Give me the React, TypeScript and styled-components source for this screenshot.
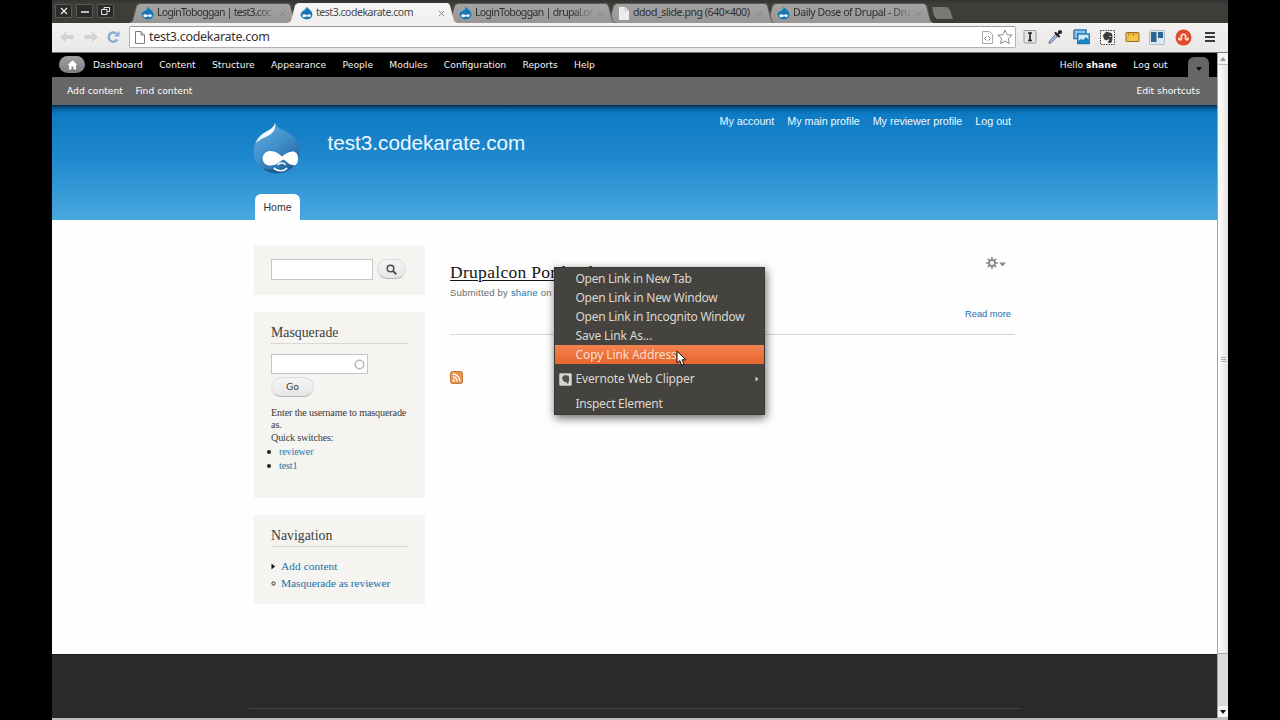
import React from "react";
import styled, { createGlobalStyle, css } from "styled-components";

const UI = `"Noto Sans", "Open Sans", sans-serif`;
const SERIF = `"Liberation Serif", serif`;
const SANS = `"Liberation Sans", sans-serif`;
const DEJA = `"DejaVu Sans", sans-serif`;

const Global = createGlobalStyle`
  * { box-sizing: border-box; }
  body { margin: 0; background: #000; overflow: hidden; }
  ul { margin: 0; padding: 0; list-style: none; }
  h1, h2, h3, p { margin: 0; font-weight: normal; }
  svg { display: block; flex: none; }
`;

const Screen = styled.div`
  position: relative;
  width: 1280px;
  height: 720px;
  padding: 0 52px;
  background: #000;
  overflow: hidden;
`;
const Browser = styled.div`
  display: flex;
  flex-direction: column;
  width: 1176px;
  height: 720px;
  background: #bdbdbd;
`;

/* ---- title bar with tabs ---- */
const TitleBar = styled.div`
  display: flex;
  height: 23px;
  flex: none;
  background: linear-gradient(#343331, #3f3e3b 4px, #3c3b38);
`;
const WindowButtons = styled.div`
  display: flex;
  gap: 4px;
  padding: 4px 0 0 3px;
  width: 77px;
`;
const WindowButton = styled.div`
  display: grid;
  place-items: center;
  width: 17px;
  height: 14px;
  border: 1px solid #5b5955;
  border-radius: 1px;
  background: #2b2a28;
`;
const TabStrip = styled.div`
  display: flex;
  padding-top: 3px;
`;
const TabShape = styled.div<{ $active?: boolean; $z: number }>`
  position: relative;
  z-index: ${(p) => p.$z};
  width: 169px;
  height: 20px;
  margin-right: -10px;
  background: ${(p) => (p.$active ? "#f1f0ef" : "#5a5855")};
  clip-path: polygon(0 100%, 3px 90%, 7px 10%, 10px 0, 160px 0, 162px 10%, 166px 90%, 169px 100%);
`;
const TabFace = styled.div<{ $active?: boolean }>`
  display: flex;
  align-items: center;
  height: 20px;
  padding: 0 12px 0 12px;
  background: ${(p) => (p.$active ? "linear-gradient(#f8f7f6, #f0efee)" : "linear-gradient(#a5a4a2, #979694)")};
  clip-path: polygon(1px 100%, 4px 90%, 8px 14%, 11px 1px, 159px 1px, 161px 14%, 165px 90%, 168px 100%);
`;
const TabTitle = styled.span<{ $active?: boolean; $fade?: boolean; $ls: number }>`
  flex: 1;
  margin-left: 3px;
  white-space: nowrap;
  font: 10.5px/18px ${UI};
  height: 20px;
  letter-spacing: ${(p) => p.$ls}px;
  color: ${(p) => (p.$active ? "#474747" : "#2e2e2e")};
  ${(p) => p.$fade && css`mask-image: linear-gradient(90deg, #000 80%, transparent 99%);`}
`;
const NewTab = styled.div`
  width: 21px;
  height: 12px;
  margin: 4px 0 0 8px;
  background: #7a7977;
  clip-path: polygon(0 0, 15px 0, 18px 3px, 21px 12px, 5px 12px, 2px 9px);
`;

/* ---- address toolbar ---- */
const NavBar = styled.div`
  display: flex;
  align-items: center;
  height: 30px;
  flex: none;
  padding: 0 9px 1px 7px;
  background: linear-gradient(#f3f2f1, #e9e8e6);
  border-bottom: 1px solid #77757a;
`;
const NavArrows = styled.div`
  display: flex;
  align-items: center;
  gap: 8px;
  width: 70px;
`;
const Omnibox = styled.div`
  display: flex;
  align-items: center;
  gap: 4px;
  width: 887px;
  height: 22px;
  padding: 0 2px 0 5px;
  background: #fff;
  border: 1px solid #b3b1af;
  border-top-color: #9b9a98;
  border-radius: 2px;
`;
const Url = styled.span`
  flex: 1;
  font: 12.5px/20px ${UI};
  letter-spacing: -0.3px;
  color: #333;
`;
const Extensions = styled.div`
  display: flex;
  flex: 1;
  align-items: center;
  justify-content: space-between;
  padding-left: 6px;
`;

/* ---- viewport ---- */
const Viewport = styled.div`
  display: flex;
  height: 665px;
  flex: none;
`;
const Page = styled.div`
  display: flex;
  flex-direction: column;
  width: 1165px;
  background: #fefefe;
`;
const AdminBar = styled.div`
  display: flex;
  height: 24px;
  flex: none;
  padding: 0 8px 0 7px;
  background: #000;
  font: 9.2px/24px ${DEJA};
  color: #f2f2f2;
`;
const HomePill = styled.div`
  display: grid;
  place-items: center;
  width: 26px;
  height: 17px;
  margin: 3px 8px 0 0;
  border-radius: 9px;
  background: linear-gradient(#a0a0a0, #7e7e7e);
`;
const AdminLinks = styled.div`
  display: flex;
  gap: 16.3px;
`;
const AdminRight = styled(AdminLinks)`
  margin-left: auto;
`;
const DrawerToggle = styled.div`
  display: grid;
  place-items: center;
  width: 21px;
  height: 20px;
  margin: 4px 0 0 4px;
  padding-top: 3px;
  border-radius: 6px 6px 0 0;
  background: #666;
`;
const ShortcutBar = styled.div`
  display: flex;
  gap: 12.5px;
  height: 28px;
  flex: none;
  padding: 0 17px 0 15px;
  background: #666;
  font: 9.2px/28px ${DEJA};
  color: #fff;
`;
const PushRight = styled.span`
  margin-left: auto;
`;
const Header = styled.header`
  display: flex;
  height: 115px;
  flex: none;
  padding: 0 206px 0 201px;
  background:
    linear-gradient(rgba(0, 20, 35, 0.75), rgba(0, 30, 60, 0.25) 4px, rgba(0, 30, 60, 0) 9px),
    linear-gradient(#0a78c2, #1f88cd 45%, #48a8e0);
  font-family: ${SANS};
  color: #eef8ff;
`;
const Branding = styled.div`
  display: flex;
  flex-direction: column;
  justify-content: space-between;
`;
const BrandRow = styled.div`
  display: flex;
  gap: 26.5px;
  padding-top: 16px;
`;
const SiteName = styled.h1`
  font-size: 20.7px;
  line-height: 24px;
  padding-top: 10px;
`;
const HomeTab = styled.div`
  width: 45px;
  height: 26px;
  margin-left: 2px;
  border-radius: 6px 6px 0 0;
  background: #fefefe;
  font-size: 10.5px;
  line-height: 27px;
  text-align: center;
  color: #333;
`;
const UserLinks = styled.nav`
  display: flex;
  gap: 13px;
  margin-left: auto;
  font-size: 10.75px;
  letter-spacing: -0.03px;
  line-height: 33px;
`;
const Main = styled.main`
  display: flex;
  height: 434px;
  flex: none;
  gap: 25px;
  padding: 25px 202px 0;
`;
const Sidebar = styled.aside`
  display: flex;
  flex-direction: column;
  width: 171px;
  gap: 17px;
`;
const Block = styled.section<{ $h: number }>`
  height: ${(p) => p.$h}px;
  padding: 0 17px;
  background: #f5f4f1;
  font-family: ${SERIF};
  color: #3b3b3b;
`;
const SearchRow = styled.div`
  display: flex;
  gap: 4px;
  padding-top: 14px;
`;
const Field = styled.div<{ $w: number; $h: number }>`
  display: flex;
  align-items: center;
  justify-content: flex-end;
  width: ${(p) => p.$w}px;
  height: ${(p) => p.$h}px;
  padding-right: 2px;
  background: #fff;
  border: 1px solid #c6c6c4;
`;
const PillButton = styled.div<{ $w: number; $top?: number }>`
  display: grid;
  place-items: center;
  width: ${(p) => p.$w}px;
  height: 20px;
  margin-top: ${(p) => p.$top ?? 0}px;
  border: 1px solid #dcdcdc;
  border-bottom-color: #b4b4b4;
  border-radius: 10px;
  background: linear-gradient(#f5f5f5, #e6e6e6);
  font: 9.5px/18px ${DEJA};
  color: #3a3a3a;
`;
const BlockTitle = styled.h2`
  height: 32px;
  margin-bottom: 10px;
  padding-top: 11px;
  border-bottom: 1px solid #d8d7d4;
  font-size: 13.8px;
  line-height: 20px;
`;
const Help = styled.p`
  margin-top: 10px;
  font-size: 10.2px;
  line-height: 12.3px;
  white-space: nowrap;
`;
const Switches = styled.ul`
  margin: 1px 0 0 -4px;
  font-size: 10.2px;
  line-height: 14.2px;
  color: #1b78ae;
`;
const SwitchItem = styled.li`
  display: flex;
  align-items: center;
  gap: 8px;
  letter-spacing: -0.15px;
  &::before {
    content: "";
    width: 4px;
    height: 4px;
    border-radius: 50%;
    background: #222;
  }
`;
const NavList = styled.ul`
  padding-top: 1px;
  font-size: 11.4px;
  line-height: 17px;
  color: #1b70a6;
`;
const NavItem = styled.li`
  display: flex;
  align-items: center;
  gap: 5px;
  white-space: nowrap;
`;
const Content = styled.article`
  width: 565px;
`;
const Node = styled.div`
  display: flex;
  justify-content: space-between;
  height: 90px;
  border-bottom: 1px solid #d6d6d6;
`;
const NodeText = styled.div`
  padding-top: 16px;
`;
const NodeTitle = styled.h2`
  font: 17.5px/22px ${SERIF};
  color: #151515;
  text-decoration: underline;
  text-decoration-thickness: 1px;
  text-underline-offset: 2px;
  white-space: nowrap;
`;
const Submitted = styled.p`
  margin-top: 4px;
  font: 9.6px/12px ${SANS};
  letter-spacing: 0.17px;
  color: #6c6c6c;
  white-space: nowrap;
`;
const LinkText = styled.span`
  color: #1b78ae;
`;
const NodeSide = styled.div`
  display: flex;
  flex-direction: column;
  justify-content: space-between;
  align-items: flex-end;
  padding: 12px 4px 14px 0;
  font: 9.3px/12px ${SANS};
  color: #1b70a6;
`;
const Gear = styled.div`
  display: flex;
  align-items: center;
  gap: 1px;
  margin-right: 5px;
`;
const FeedIcon = styled.div`
  padding-top: 36px;
`;
const Footer = styled.footer`
  flex: 1;
  padding: 53px 197px 0 197px;
  background: #2a2a2a;
  border-top: 1px solid #1b1b1b;
`;
const FooterRule = styled.div`
  border-top: 1px solid #464646;
`;

/* ---- scrollbar ---- */
const Scrollbar = styled.div`
  display: flex;
  flex-direction: column;
  justify-content: space-between;
  width: 11px;
  background: #dadada;
  border-left: 1px solid #a5a3a1;
`;
const ScrollButton = styled.div`
  display: grid;
  place-items: center;
  height: 12px;
  background: #f5f5f5;
  border-bottom: 1px solid #bbb;
`;
const Thumb = styled.div`
  display: flex;
  flex-direction: column;
  align-items: center;
  justify-content: center;
  gap: 1px;
  height: 589px;
  margin-bottom: auto;
  background: linear-gradient(90deg, #fff, #f3f2f1 50%, #e2e1e0);
  border-bottom: 1px solid #a9a9a9;
`;
const Grip = styled.div`
  width: 5px;
  height: 1px;
  background: #aaa;
`;

/* ---- context menu ---- */
const Menu = styled.div`
  position: absolute;
  left: 554px;
  top: 267px;
  width: 211px;
  height: 148px;
  padding-top: 2px;
  background: #444340;
  border: 1px solid #3a3936;
  box-shadow: 1px 3px 9px rgba(0, 0, 0, 0.6);
`;
const MenuItem = styled.div<{ $hot?: boolean; $space?: boolean }>`
  display: flex;
  align-items: center;
  height: ${(p) => (p.$space ? 19 : 18.8)}px;
  margin-top: ${(p) => (p.$space ? 5.6 : 0)}px;
  padding-right: 5px;
  font: 12px/18px ${UI};
  white-space: nowrap;
  color: ${(p) => (p.$hot ? "#f9ddce" : "#dcd8cf")};
  background: ${(p) => (p.$hot ? "linear-gradient(#f28350, #e7652f)" : "none")};
`;
const MenuIcon = styled.div`
  width: 20.500px;
  padding-left: 4px;
`;
const Label = styled.span<{ $ls: number }>`
  letter-spacing: ${(p) => p.$ls}px;
`;
const Pointer = styled.div`
  position: absolute;
  left: 676px;
  top: 350px;
`;

const DropIcon = () => (
  <svg width="13" height="14" viewBox="0 0 13 14">
    <path d="M6.8.8C7.6 2.600 12.400 4.500 12.400 8.600c0 3-2.600 4.900-5.700 4.900S.6 11.500.6 8.600C.6 5.400 5.600 3.800 6.800.8Z" fill="#1876b4" />
    <path d="M3 8.600c1.400-.8 2.700 0 3.800.6 1.400-.9 3.400-1.500 4 .1.300 1.800-1.700 2.200-3.800 1C5 11.700 2.400 11.300 2.300 9.900c0-.6.200-1 .7-1.300Z" fill="#f2f6f8" />
    <path d="M1.600 6.200C2.600 4.200 5.500 3.400 6.700 1.600 6.400 4.300 3.400 4.700 1.600 6.200Z" fill="#8cc4e4" />
  </svg>
);
const FileIcon = ({ light }: { light?: boolean }) => (
  <svg width={light ? 12 : 10} height="13" viewBox="0 0 10 13">
    <path d="M.5.5H6L9.500 4v8.500h-9Z" fill={light ? "#eceae8" : "#fff"} stroke={light ? "#f4f3f2" : "#7c7c7c"} />
    <path d="M6 .5V4h3.500" fill="none" stroke={light ? "#c9c7c5" : "#7c7c7c"} />
  </svg>
);
const Close = () => (
  <svg width="7" height="7" viewBox="0 0 7 7">
    <path d="M1 1l5 5M6 1L1 6" stroke="#858482" strokeWidth="1" />
  </svg>
);
const ArrowIcon = ({ flip }: { flip?: boolean }) => (
  <svg width="16" height="12" viewBox="0 0 16 12">
    <path d={flip ? "M15 6L9 .7v3.200H1.500v4.200H9v3.200Z" : "M1 6l6-5.300v3.200h7.500v4.200H7v3.200Z"} fill="#d3d2d0" />
  </svg>
);
const Druplicon = () => (
  <svg width="48" height="54" viewBox="0 0 48 54">
    <defs>
      <linearGradient id="drop" x1="0" y1="0" x2=".7" y2="1">
        <stop offset="0" stopColor="#6bb0e2" />
        <stop offset=".55" stopColor="#3f8fcb" />
        <stop offset="1" stopColor="#22659c" />
      </linearGradient>
    </defs>
    <path d="M22 .8c1 4.400 3.800 6.400 8 8.300C39.500 13.200 46.500 18.500 46.500 30c0 13.500-9.800 22.500-23 22.500S.7 43.500.7 31C.7 20.500 5.500 15.300 12 11.500 17 8.600 21.500 6.500 22 .8Z" fill="url(#drop)" />
    <path d="M2.800 22.500C4.500 16.500 9 13 13.500 10.500 17.500 8.200 21 6.300 22 2c.8 5-.6 8.400-4.500 11.200C12.500 16.800 6.500 17.300 2.800 22.500Z" fill="#f4faff" />
    <path d="M10 47c6 6.500 22 8.500 31-4-5 3-18 8-31 4Z" fill="#1d5f95" />
    <path d="M16.500 30c5-.5 8.500 2 12.500 5.500 4-3.400 8.500-5.900 12.500-4.700 4.500 1.600 4.800 10.500 1.300 13-3.800 1.900-8-1.900-12.300-5.300-4.500 3-8 6-13 6-5 0-8-3.300-7.800-7.300.2-4 3.300-6.900 6.800-7.200Z" fill="#fff" />
    <path d="M24.500 44c2.200-2.600 6-2.800 8-.3" fill="none" stroke="#fff" strokeWidth="1.500" />
    <path d="M21.300 47.500c3.500 3 9 3 12.400-.2" fill="none" stroke="#fff" strokeWidth="1.700" strokeLinecap="round" />
  </svg>
);

const tabs = [
  { title: "LoginToboggan | test3.coc", ls: -0.72, fade: true },
  { title: "test3.codekarate.com", ls: -0.47, active: true },
  { title: "LoginToboggan | drupal.or", ls: -0.66, fade: true },
  { title: "ddod_slide.png (640×400)", ls: -0.42, file: true },
  { title: "Daily Dose of Drupal - Dru", ls: -0.42, fade: true },
];

const adminLinks = ["Dashboard", "Content", "Structure", "Appearance", "People", "Modules", "Configuration", "Reports", "Help"];

export default function App() {
  return (
    <Screen>
      <Global />
      <Browser>
        <TitleBar>
          <WindowButtons>
            <WindowButton>
              <svg width="8" height="8" viewBox="0 0 8 8"><path d="M1 1l6 6M7 1L1 7" stroke="#eee" strokeWidth="1.300" /></svg>
            </WindowButton>
            <WindowButton>
              <svg width="8" height="8" viewBox="0 0 8 8"><path d="M0 5h8" stroke="#eee" strokeWidth="1.500" /></svg>
            </WindowButton>
            <WindowButton>
              <svg width="9" height="8" viewBox="0 0 9 8"><path d="M3 2.500V.5h5.500v4h-2M.5 2.500H6v5H.5Z" fill="none" stroke="#e4e4e4" /></svg>
            </WindowButton>
          </WindowButtons>
          <TabStrip>
            {tabs.map((t, i) => (
              <TabShape key={t.title} $active={t.active} $z={t.active ? 9 : 6 - i}>
                <TabFace $active={t.active}>
                  {t.file ? <FileIcon light /> : <DropIcon />}
                  <TabTitle $active={t.active} $fade={t.fade} $ls={t.ls}>{t.title}</TabTitle>
                  <Close />
                </TabFace>
              </TabShape>
            ))}
            <NewTab />
          </TabStrip>
        </TitleBar>

        <NavBar>
          <NavArrows>
            <ArrowIcon />
            <ArrowIcon flip />
            <svg width="14" height="14" viewBox="0 0 14 14">
              <path d="M10.300 9.500A4.600 4.600 0 1 1 9.600 3.900" fill="none" stroke="#86aed2" strokeWidth="2.500" />
              <path d="M12.500 1V6.500H7Z" fill="#86aed2" />
            </svg>
          </NavArrows>
          <Omnibox>
            <FileIcon />
            <Url>test3.codekarate.com</Url>
            <svg width="11" height="13" viewBox="0 0 11 13">
              <path d="M.5.500H7.500L10.500 3.500v9H.5Z" fill="#fff" stroke="#aaa" />
              <path d="M4.500 5.500l-2 2 2 2M6.500 5.500l2 2-2 2" fill="none" stroke="#777" />
            </svg>
            <svg width="16" height="16" viewBox="0 0 16 16">
              <path d="M8 1l2.100 4.700 5 .5-3.800 3.400 1.100 5L8 12l-4.400 2.600 1.100-5L.9 6.200l5-.5Z" fill="#fff" stroke="#8a8a8a" />
            </svg>
          </Omnibox>
          <Extensions>
            <svg width="16" height="16" viewBox="0 0 16 16">
              <rect x="2" y="1.500" width="12" height="12.500" rx="1" fill="#e6e6e6" stroke="#9a9a9a" />
              <path d="M6 4h4M6 11.500h4M8 4v7.500" stroke="#222" strokeWidth="1.600" />
            </svg>
            <svg width="16" height="16" viewBox="0 0 16 16">
              <path d="M2 14.500C2 12 4 10 8.500 5.500L10.500 7.500C6.500 11 5 14 2 14.500Z" fill="#a9bbd8" stroke="#5d6f92" />
              <path d="M8.500 4l3.500 3.500M10.500 5.500l2.500-2.500" stroke="#25252c" strokeWidth="2.200" strokeLinecap="round" />
              <circle cx="13" cy="3" r="2.100" fill="#25252c" />
            </svg>
            <svg width="17" height="16" viewBox="0 0 17 16">
              <path d="M1 1h12v4M1 1v8.500h4" fill="#8cc3e6" stroke="#2a73b0" strokeWidth="1.500" />
              <path d="M1.800 1.800h10.400V5H5v4H1.800Z" fill="#8cc3e6" />
              <rect x="4.700" y="5" width="11.500" height="9.500" fill="#d5ecf7" stroke="#1b7dbd" strokeWidth="1.500" />
              <path d="M5 14.500v-2.500l3-2 2 1 3-3 3 3v3.500Z" fill="#1784c4" />
            </svg>
            <svg width="17" height="17" viewBox="0 0 17 17">
              <rect x="1.500" y="1.500" width="14" height="14" fill="#f5f5f5" stroke="#444" strokeDasharray="1.500 1" />
              <path d="M4 6l3-3c1-.6 2 .4 3 .4 2.600.2 3.400 1 3.400 4 0 4-.4 6.600-2.400 6.600-2.500 0-2.500-2.600-.6-2.600-.2-1.800-1.400-1.200-1.900-.5-1.500 1-4 .3-4.500-4.900Z" fill="#3c3c3c" />
              <path d="M10.500 7.500h1.500" stroke="#eee" />
            </svg>
            <svg width="15" height="12" viewBox="0 0 15 12">
              <rect x="1" y="1.500" width="13" height="9" rx=".5" fill="#f4c344" stroke="#94702c" />
              <path d="M3.500 2v3M6 2v2M8.500 2v3M11 2v2" stroke="#b98a26" />
            </svg>
            <svg width="16" height="15" viewBox="0 0 16 15">
              <rect x=".5" y=".5" width="15" height="14" rx="1" fill="#dbe8f0" stroke="#a9bfcc" />
              <rect x="2" y="2" width="5.500" height="10" fill="#2c6590" />
              <rect x="9" y="2" width="5" height="6" fill="#2c6590" />
            </svg>
            <svg width="17" height="17" viewBox="0 0 17 17">
              <circle cx="8.500" cy="8.500" r="8" fill="#de4a2b" />
              <path d="M4 8.500v1.200c0 1.700 2.400 1.700 2.400 0V7.200c0-2.600 4.200-2.600 4.200 0v2.500c0 1.700 2.400 1.700 2.400 0V8.500" fill="none" stroke="#fbe6e0" strokeWidth="1.700" />
            </svg>
            <svg width="18" height="12" viewBox="0 0 18 12">
              <path d="M4 2h10M4 6h10M4 10h10" stroke="#3c3c3c" strokeWidth="2" />
            </svg>
          </Extensions>
        </NavBar>

        <Viewport>
          <Page>
            <AdminBar>
              <HomePill>
                <svg width="11" height="10" viewBox="0 0 11 10"><path d="M5.500.3L.6 5h1.400v4.500h2.500V6.500h2v3H9V5h1.400Z" fill="#fff" /></svg>
              </HomePill>
              <AdminLinks>
                {adminLinks.map((l) => <span key={l}>{l}</span>)}
              </AdminLinks>
              <AdminRight>
                <span>Hello <b>shane</b></span>
                <span>Log out</span>
                <DrawerToggle>
                  <svg width="6" height="4" viewBox="0 0 7 4"><path d="M0 0h7L3.500 4Z" fill="#000" /></svg>
                </DrawerToggle>
              </AdminRight>
            </AdminBar>
            <ShortcutBar>
              <span>Add content</span>
              <span>Find content</span>
              <PushRight>Edit shortcuts</PushRight>
            </ShortcutBar>

            <Header>
              <Branding>
                <BrandRow>
                  <Druplicon />
                  <SiteName>test3.codekarate.com</SiteName>
                </BrandRow>
                <HomeTab>Home</HomeTab>
              </Branding>
              <UserLinks>
                <span>My account</span>
                <span>My main profile</span>
                <span>My reviewer profile</span>
                <span>Log out</span>
              </UserLinks>
            </Header>

            <Main>
              <Sidebar>
                <Block $h={50}>
                  <SearchRow>
                    <Field $w={102} $h={21} />
                    <PillButton $w={29}>
                      <svg width="11" height="11" viewBox="0 0 11 11">
                        <circle cx="4.500" cy="4.500" r="3.300" fill="none" stroke="#4a4a4a" strokeWidth="1.500" />
                        <path d="M7 7l3.300 3.300" stroke="#4a4a4a" strokeWidth="1.900" />
                      </svg>
                    </PillButton>
                  </SearchRow>
                </Block>
                <Block $h={186}>
                  <BlockTitle><Label $ls={0}>Masquerade</Label></BlockTitle>
                  <Field $w={97} $h={20}>
                    <svg width="11" height="11" viewBox="0 0 11 11"><circle cx="5.500" cy="5.500" r="4.200" fill="none" stroke="#b5b5b5" strokeWidth="1.500" /></svg>
                  </Field>
                  <PillButton $w={43} $top={3}>Go</PillButton>
                  <Help>
                    <Label $ls={-0.16}>Enter the username to masquerade</Label><br />
                    as.<br />
                    <Label $ls={-0.2}>Quick switches:</Label>
                  </Help>
                  <Switches>
                    <SwitchItem>reviewer</SwitchItem>
                    <SwitchItem>test1</SwitchItem>
                  </Switches>
                </Block>
                <Block $h={89}>
                  <BlockTitle><Label $ls={0}>Navigation</Label></BlockTitle>
                  <NavList>
                    <NavItem>
                      <svg width="5" height="7" viewBox="0 0 5 7"><path d="M.5.500L4 3.500.5 6.500Z" fill="#111" /></svg>
                      <Label $ls={0.05}>Add content</Label>
                    </NavItem>
                    <NavItem>
                      <svg width="5" height="5" viewBox="0 0 5 5"><circle cx="2.500" cy="2.500" r="1.600" fill="#fff" stroke="#222" /></svg>
                      <Label $ls={-0.07}>Masquerade as reviewer</Label>
                    </NavItem>
                  </NavList>
                </Block>
              </Sidebar>

              <Content>
                <Node>
                  <NodeText>
                    <NodeTitle><Label $ls={0.3}>Drupalcon Portland</Label></NodeTitle>
                    <Submitted>Submitted by <LinkText>shane</LinkText> on</Submitted>
                  </NodeText>
                  <NodeSide>
                    <Gear>
                      <svg width="12" height="12" viewBox="0 0 12 12">
                        <circle cx="6" cy="6" r="3" fill="none" stroke="#8c8c8c" strokeWidth="2" />
                        <path d="M6 0v2.500M6 9.500V12M0 6h2.500M9.500 6H12M1.800 1.800l1.700 1.700M8.500 8.500l1.700 1.700M10.200 1.800L8.500 3.500M3.500 8.500l-1.700 1.700" stroke="#8c8c8c" strokeWidth="1.700" />
                      </svg>
                      <svg width="7" height="7" viewBox="0 0 7 7"><path d="M0 2.500h7L3.500 6.500Z" fill="#8c8c8c" /></svg>
                    </Gear>
                    <span>Read more</span>
                  </NodeSide>
                </Node>
                <FeedIcon>
                  <svg width="13" height="13" viewBox="0 0 13 13">
                    <rect x=".5" y=".5" width="12" height="12" rx="2" fill="#e8924a" stroke="#c77a36" />
                    <circle cx="3.700" cy="9.400" r="1.200" fill="#fff" />
                    <path d="M2.700 5.800a4.500 4.500 0 0 1 4.500 4.600M2.700 3a7.300 7.300 0 0 1 7.300 7.400" fill="none" stroke="#fff" strokeWidth="1.400" />
                  </svg>
                </FeedIcon>
              </Content>
            </Main>
            <Footer><FooterRule /></Footer>
          </Page>
          <Scrollbar>
            <ScrollButton>
              <svg width="6" height="4" viewBox="0 0 6 4"><path d="M0 4h6L3 0Z" fill="#999" /></svg>
            </ScrollButton>
            <Thumb><Grip /><Grip /><Grip /></Thumb>
            <ScrollButton>
              <svg width="6" height="4" viewBox="0 0 6 4"><path d="M0 0h6L3 4Z" fill="#111" /></svg>
            </ScrollButton>
          </Scrollbar>
        </Viewport>
      </Browser>

      <Menu>
        <MenuItem><MenuIcon /><Label $ls={-0.3}>Open Link in New Tab</Label></MenuItem>
        <MenuItem><MenuIcon /><Label $ls={-0.25}>Open Link in New Window</Label></MenuItem>
        <MenuItem><MenuIcon /><Label $ls={-0.27}>Open Link in Incognito Window</Label></MenuItem>
        <MenuItem><MenuIcon /><Label $ls={-0.15}>Save Link As...</Label></MenuItem>
        <MenuItem $hot><MenuIcon /><Label $ls={-0.1}>Copy Link Address</Label></MenuItem>
        <MenuItem $space>
          <MenuIcon>
            <svg width="13" height="13" viewBox="0 0 13 13">
              <rect x=".5" y=".5" width="12" height="12" rx="1" fill="#d6d4d0" stroke="#b3b1ad" />
              <path d="M3 4.500l2-2c1-.4 4 0 4.800.8.500 2 .4 6-.6 7-1.500.6-2.400-.6-1.200-1.600C5.500 9.500 3.500 8 3 4.500Z" fill="#53514e" />
            </svg>
          </MenuIcon>
          <Label $ls={-0.14}>Evernote Web Clipper</Label>
          <PushRight><svg width="4" height="6" viewBox="0 0 4 6"><path d="M.5.500L3.500 3 .5 5.500Z" fill="#d5d2ca" /></svg></PushRight>
        </MenuItem>
        <MenuItem $space><MenuIcon /><Label $ls={-0.25}>Inspect Element</Label></MenuItem>
      </Menu>
      <Pointer>
        <svg width="11" height="17" viewBox="0 0 11 17">
          <path d="M1 1v12l2.800-2.500 2 4.800 2.200-1-2-4.500h3.800Z" fill="#fff" stroke="#111" />
        </svg>
      </Pointer>
    </Screen>
  );
}
